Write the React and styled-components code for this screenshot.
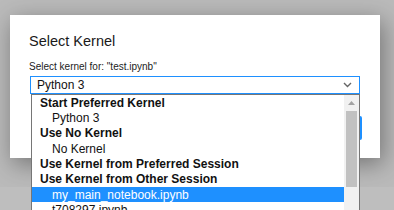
import React from "react";
import styled, { createGlobalStyle } from "styled-components";

const Global = createGlobalStyle`
  html, body { margin: 0; padding: 0; }
  body {
    background: #bebebe;
    font-family: "Liberation Sans", Arial, sans-serif;
    width: 394px;
    height: 210px;
    overflow: hidden;
  }
`;

const Page = styled.div`
  position: relative;
  width: 394px;
  height: 210px;
  overflow: hidden;
`;

const Backdrop = styled.div`
  height: 187px;
  background: #bababa;
  overflow: hidden;
  padding: 15px 14px 0 10px;
  box-sizing: border-box;
`;

const Dialog = styled.div`
  width: 370px;
  height: 143px;
  box-sizing: border-box;
  background: #fff;
  box-shadow: 3px 6px 22px rgba(0, 0, 0, 0.38);
  padding: 18px 18px 0 19px;
  display: flex;
  flex-direction: column;
`;

const Title = styled.div`
  font-size: 14.5px;
  line-height: 17px;
  color: #1a1a1a;
`;

const Label = styled.div`
  margin-top: 11px;
  font-size: 10px;
  line-height: 12px;
  color: #222;
`;

const Select = styled.div`
  margin: 3px 2px 0 1px;
  height: 18px;
  box-sizing: border-box;
  border: 1px solid #1e90ff;
  display: flex;
  align-items: center;
  justify-content: space-between;
  padding: 0 6px 0 6px;
  font-size: 12px;
  color: #111;
`;

const Chevron = styled.svg`
  width: 9px;
  height: 6px;
  margin-right: 1px;
`;

const Actions = styled.div`
  margin-top: 22px;
  display: flex;
  justify-content: flex-end;
`;

const Button = styled.div`
  height: 24px;
  width: 60px;
  background: #1e90ff;
  border-radius: 2px;
`;

const List = styled.div`
  position: absolute;
  left: 31px;
  top: 94px;
  width: 329px;
  height: 130px;
  box-sizing: border-box;
  border: 1px solid #767676;
  background: #fff;
  display: flex;
  overflow: hidden;
`;

const Options = styled.div`
  flex: 1;
  display: flex;
  flex-direction: column;
`;

const Row = styled.div`
  height: 15.35px;
  flex: none;
  display: flex;
  align-items: center;
  font-size: 12px;
  white-space: nowrap;
  padding-left: ${(p) => (p.$group ? "8px" : "20px")};
  font-weight: ${(p) => (p.$group ? 700 : 400)};
  background: ${(p) => (p.$active ? "#1e90ff" : "transparent")};
  color: ${(p) => (p.$active ? "#fff" : "#111")};
`;

const Scrollbar = styled.div`
  width: 15px;
  background: #f1f1f1;
  display: flex;
  flex-direction: column;
  align-items: center;
`;

const Arrow = styled.div`
  height: 16px;
  display: flex;
  align-items: center;
  justify-content: center;
`;

const Thumb = styled.div`
  width: 11px;
  height: 76px;
  background: #c1c1c1;
`;

const rows = [
  { t: "Start Preferred Kernel", g: true },
  { t: "Python 3" },
  { t: "Use No Kernel", g: true },
  { t: "No Kernel" },
  { t: "Use Kernel from Preferred Session", g: true },
  { t: "Use Kernel from Other Session", g: true },
  { t: "my_main_notebook.ipynb", a: true },
  { t: "t708297.ipynb" },
];

export default function App() {
  return (
    <Page>
      <Global />
      <Backdrop>
        <Dialog>
          <Title>Select Kernel</Title>
          <Label>Select kernel for: "test.ipynb"</Label>
          <Select>
            <span>Python 3</span>
            <Chevron viewBox="0 0 9 6">
              <polyline points="1,1 4.5,4.5 8,1" fill="none" stroke="#666" strokeWidth="1.4" />
            </Chevron>
          </Select>
          <Actions>
            <Button />
          </Actions>
        </Dialog>
      </Backdrop>
      <List>
        <Options>
          {rows.map((r, i) => (
            <Row key={i} $group={r.g} $active={r.a}>
              {r.t}
            </Row>
          ))}
        </Options>
        <Scrollbar>
          <Arrow>
            <svg width="7" height="4" viewBox="0 0 7 4">
              <polygon points="0,4 3.5,0 7,4" fill="#a3a3a3" />
            </svg>
          </Arrow>
          <Thumb />
        </Scrollbar>
      </List>
    </Page>
  );
}
